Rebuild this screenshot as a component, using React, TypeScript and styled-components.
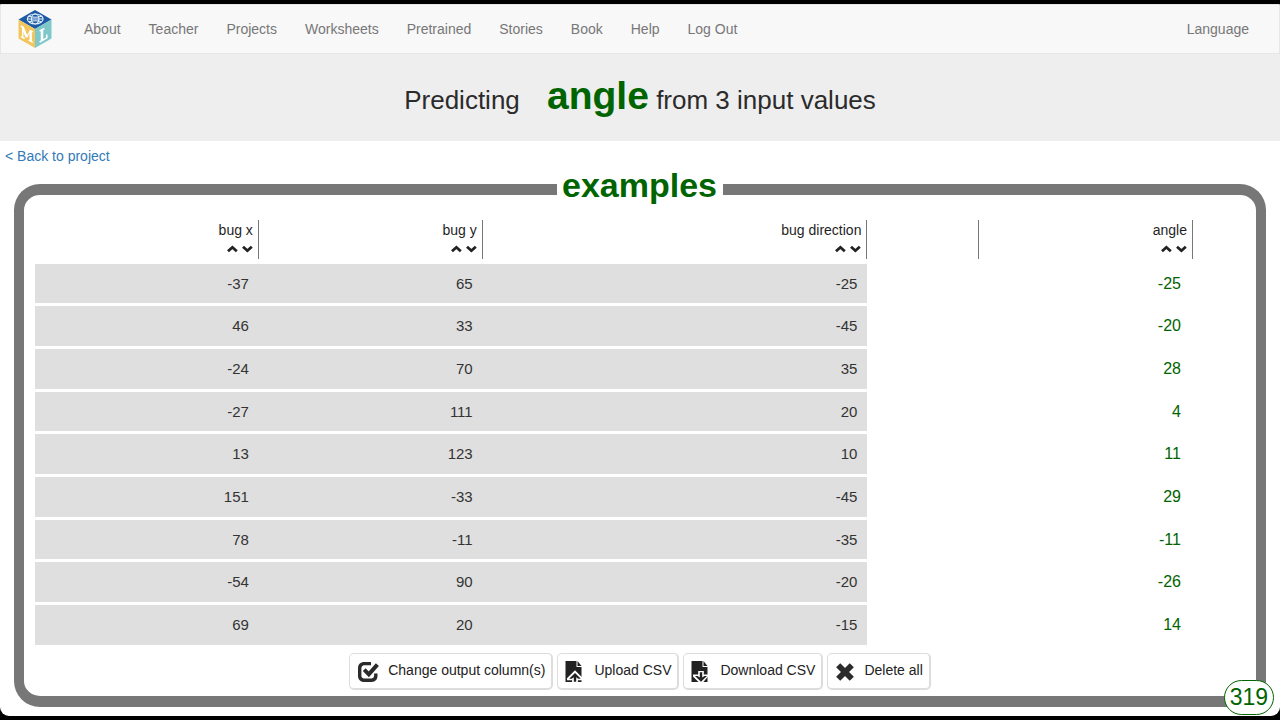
import React from "react";
import styled, { createGlobalStyle } from "styled-components";

const GlobalStyle = createGlobalStyle`
  * { box-sizing: border-box; }
  body {
    margin: 0;
    background: #000;
    color: #2b2b2b;
    font-family: "Liberation Sans", Arial, sans-serif;
    font-size: 14px;
    line-height: 20px;
  }
`;

const Frame = styled.div`
  padding: 4px 0;
`;

const Screen = styled.div`
  position: relative;
  background: #fff;
  border-radius: 2px 2px 9px 9px;
  overflow: hidden;
  padding-bottom: 9px;
`;

const Nav = styled.nav`
  display: flex;
  align-items: center;
  height: 50px;
  padding: 0 16px 0 17px;
  background: #f8f8f8;
  border: 1px solid #e7e7e7;
`;

const Brand = styled.a`
  display: flex;
  margin-right: 18px;
`;

const NavLink = styled.a`
  padding: 0 14px;
  color: #777;
  text-decoration: none;
`;

const Spacer = styled.div`
  flex: 1;
`;

const Hero = styled.header`
  display: flex;
  justify-content: center;
  height: 87px;
  padding-top: 20px;
  background: #eee;
`;

const Title = styled.h1`
  margin: 0;
  font-size: 26px;
  font-weight: 400;
  line-height: 44px;
  white-space: nowrap;
`;

const Target = styled.strong`
  margin-left: 20px;
  color: #006400;
  font-size: 39px;
`;

const BackRow = styled.div`
  padding: 5px 5px 0;
`;

const BackLink = styled.a`
  display: block;
  width: max-content;
  color: #337ab7;
  text-decoration: none;
`;

const Panel = styled.fieldset`
  min-width: 0;
  margin: 0 14px;
  padding: 7px 11px 6px;
  border: solid #777;
  border-width: 11px 10px;
  border-radius: 26px;
`;

const Legend = styled.legend`
  margin: 0 auto;
  padding: 0 6px 8px 5px;
  color: #006400;
  font-size: 34px;
  font-weight: 700;
  line-height: 39px;
`;

const Table = styled.table`
  width: 100%;
  table-layout: fixed;
  border-collapse: separate;
  border-spacing: 0;
`;

const Col = styled.col<{ $w: string }>`
  width: ${(p) => p.$w};
`;

const HeadCell = styled.th`
  padding: 0 0 5px;
  font-weight: 400;
  text-align: right;
  color: #1f1f1f;
`;

const HeadBox = styled.div`
  height: 39px;
  padding-right: 5px;
  border-right: 1px solid #777;
`;

const Sorts = styled.div`
  display: flex;
  justify-content: flex-end;
  gap: 3px;
  height: 18px;
`;

const SortButton = styled.button`
  display: flex;
  align-items: center;
  padding: 0;
  border: 0;
  background: none;
  color: #222;
`;

const Row = styled.tr`
  height: 43px;
  &:nth-child(3n + 1) {
    height: 42px;
  }
`;

const Cell = styled.td<{ $kind: "input" | "blank" | "output" }>`
  padding: 0 ${(p) => (p.$kind === "output" ? 12 : 10)}px 0 0;
  border-bottom: 3px solid #fff;
  background: ${(p) => (p.$kind === "input" ? "#dfdfdf" : "#fff")};
  color: ${(p) => (p.$kind === "output" ? "#006400" : "#333")};
  font-size: ${(p) => (p.$kind === "output" ? 16 : 15)}px;
  text-align: right;
`;

const Actions = styled.div`
  display: flex;
  justify-content: center;
  gap: 4px;
  padding-top: 5px;
`;

const ActionButton = styled.button`
  display: flex;
  align-items: center;
  gap: 9px;
  height: 37px;
  padding: 1px 6px 0 7px;
  border: 1px solid #ddd;
  border-right-width: 2px;
  border-bottom-width: 2px;
  border-radius: 5px;
  background: #fff;
  color: #222;
  font: 14px/20px "Liberation Sans", Arial, sans-serif;
  white-space: nowrap;
`;

const ActionLabel = styled.span`
  padding-bottom: 4px;
`;

const Count = styled.output`
  position: absolute;
  right: 6px;
  bottom: 1px;
  padding: 0 5px;
  border: 1px solid #006400;
  border-radius: 18px;
  background: #fff;
  color: #006400;
  font-size: 23px;
  line-height: 33px;
`;

const Logo = () => (
  <svg width="34" height="38" viewBox="0 0 34 38" role="img" aria-label="Machine Learning for Kids">
    <path d="M17 0 33.500 9.500 17 19 .5 9.500Z" fill="#1c5ba3" />
    <path d="M.5 9.500 17 19V38L.5 28.500Z" fill="#f2c65c" />
    <path d="M33.500 9.500 17 19V38L33.500 28.500Z" fill="#7fc8c9" />
    <g fill="none" stroke="#e4f1fb" strokeWidth="1.100">
      <ellipse cx="17.200" cy="9" rx="7.900" ry="5" />
      <ellipse cx="17.200" cy="9" rx="3.700" ry="5" />
      <path d="M9.300 9H25M11 6.300q6.200 1.900 12.400 0M11 11.700q6.200-1.900 12.400 0" />
    </g>
    <g fill="none" stroke="#fff">
      <path d="M4.700 17v10.500" strokeWidth="1.500" />
      <path d="M12.700 20.800v10.400" strokeWidth="2.400" />
      <path d="M4.600 17 8.800 27.300" strokeWidth="2.400" />
      <path d="M8.800 27.300 12.300 20.800" strokeWidth="1.300" />
      <path d="M2.800 15.900l2.600 1.500M2.900 26.600l3.800 2.100M10.600 30l4.200 2.400M12 20.300l2.800 1.600" strokeWidth="1.400" />
      <path d="M24 19.600v11" strokeWidth="2.500" />
      <path d="M21.600 21.200l4.800-2.700M21.600 32l7.200-4.100v-3.300" strokeWidth="1.500" />
    </g>
  </svg>
);

const SortUp = () => (
  <svg width="12" height="8" viewBox="0 0 12 8" aria-hidden="true">
    <path d="M2 6.300 6.400 2.300 10.800 6.300" fill="none" stroke="currentColor" strokeWidth="2.800" />
  </svg>
);

const SortDown = () => (
  <svg width="12" height="8" viewBox="0 0 12 8" aria-hidden="true">
    <path d="M2 1.700 6.400 5.700 10.800 1.700" fill="none" stroke="currentColor" strokeWidth="2.800" />
  </svg>
);

const CheckIcon = () => (
  <svg width="22" height="22" viewBox="0 0 22 22" aria-hidden="true">
    <path d="M14 2.600H6.500A4.500 4.500 0 0 0 2.700 7.100v8.400A4.500 4.500 0 0 0 6.500 19.300h8.300a4.500 4.500 0 0 0 4-4V12.500" fill="none" stroke="#2b2b2b" strokeWidth="3.400" />
    <path d="M7.200 8.700l4.600 4.600 8.600-9.700" fill="none" stroke="#2b2b2b" strokeWidth="4" />
  </svg>
);

const FilePage = "M.5 0H11.500V6H16.500V21H.5Z";

const UploadIcon = () => (
  <svg width="20" height="22" viewBox="0 0 20 22" aria-hidden="true">
    <path d={FilePage} fill="#222" />
    <path d="M12.500 0 16.500 5H12.500Z" fill="#222" />
    <path d="M10 9.200 17 16.200V19.300H12.900V22H7.100V19.300H2V17.200Z" fill="#fff" />
    <path d="M4.200 17.800 10 12 15.800 17.800H13.200L11.200 16.300V20.800H8.800V16.300L6.800 17.800Z" fill="#222" />
  </svg>
);

const DownloadIcon = () => (
  <svg width="20" height="22" viewBox="0 0 20 22" aria-hidden="true">
    <path d={FilePage} fill="#222" />
    <path d="M12.500 0 16.500 5H12.500Z" fill="#222" />
    <path d="M7.200 10H12.800V13.500H17V15.500L11.500 22H8.500L2 15.500V13.500H7.200Z" fill="#fff" />
    <path d="M8.800 11.300H11.200V16.500L13.400 15H16L10 20.800 4 15H6.600L8.800 16.500Z" fill="#222" />
  </svg>
);

const DeleteIcon = () => (
  <svg width="20" height="20" viewBox="0 0 20 20" aria-hidden="true">
    <path d="M3.200 3.200 16.800 16.800M16.800 3.200 3.200 16.800" fill="none" stroke="#2b2b2b" strokeWidth="5.800" />
  </svg>
);

const links = ["About", "Teacher", "Projects", "Worksheets", "Pretrained", "Stories", "Book", "Help", "Log Out"];

const columns = [
  { name: "bug x", width: "18.5%" },
  { name: "bug y", width: "18.5%" },
  { name: "bug direction", width: "31.8%" },
  { name: "", width: "9.2%" },
  { name: "angle", width: "17.7%" },
];

const examples = [
  [-37, 65, -25, -25],
  [46, 33, -45, -20],
  [-24, 70, 35, 28],
  [-27, 111, 20, 4],
  [13, 123, 10, 11],
  [151, -33, -45, 29],
  [78, -11, -35, -11],
  [-54, 90, -20, -26],
  [69, 20, -15, 14],
];

const actions = [
  { label: "Change output column(s)", icon: <CheckIcon /> },
  { label: "Upload CSV", icon: <UploadIcon /> },
  { label: "Download CSV", icon: <DownloadIcon /> },
  { label: "Delete all", icon: <DeleteIcon /> },
];

export default function App() {
  return (
    <Frame>
      <GlobalStyle />
      <Screen>
        <Nav>
          <Brand href="#"><Logo /></Brand>
          {links.map((l) => <NavLink href="#" key={l}>{l}</NavLink>)}
          <Spacer />
          <NavLink href="#">Language</NavLink>
        </Nav>
        <Hero>
          <Title>Predicting <Target>angle</Target> from 3 input values</Title>
        </Hero>
        <BackRow><BackLink href="#">&lt; Back to project</BackLink></BackRow>
        <Panel>
          <Legend>examples</Legend>
          <Table>
            <colgroup>
              {columns.map((c) => <Col key={c.name} $w={c.width} />)}
              <col />
            </colgroup>
            <thead>
              <tr>
                {columns.map((c) => (
                  <HeadCell scope="col" key={c.name}>
                    <HeadBox>
                      {c.name}
                      {c.name && (
                        <Sorts>
                          <SortButton type="button" aria-label={`Sort ${c.name} ascending`}><SortUp /></SortButton>
                          <SortButton type="button" aria-label={`Sort ${c.name} descending`}><SortDown /></SortButton>
                        </Sorts>
                      )}
                    </HeadBox>
                  </HeadCell>
                ))}
                <td />
              </tr>
            </thead>
            <tbody>
              {examples.map(([x, y, direction, angle], i) => (
                <Row key={i}>
                  <Cell $kind="input">{x}</Cell>
                  <Cell $kind="input">{y}</Cell>
                  <Cell $kind="input">{direction}</Cell>
                  <Cell $kind="blank" />
                  <Cell $kind="output">{angle}</Cell>
                  <Cell $kind="blank" />
                </Row>
              ))}
            </tbody>
          </Table>
          <Actions>
            {actions.map((a) => (
              <ActionButton type="button" key={a.label}>
                {a.icon}
                <ActionLabel>{a.label}</ActionLabel>
              </ActionButton>
            ))}
          </Actions>
        </Panel>
        <Count>319</Count>
      </Screen>
    </Frame>
  );
}
